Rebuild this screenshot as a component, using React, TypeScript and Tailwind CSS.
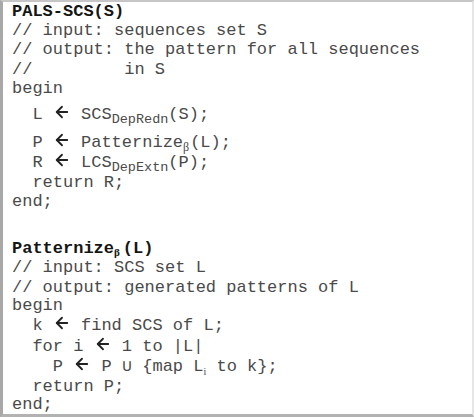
import type { ReactNode } from "react";
import { ArrowLeft } from "lucide-react";

const mono = "font-['Liberation_Mono','DejaVu_Sans_Mono',monospace]";

// one line of the listing, text sits on the bottom of a fixed-height row
function Line({ h, children, bold }: { h: string; children?: ReactNode; bold?: boolean }) {
  return (
    <div className={`flex items-end ${h}`}>
      <span className={`whitespace-pre leading-[19.5px] ${bold ? "font-bold text-[#151515]" : ""}`}>{children}</span>
    </div>
  );
}

const Arrow = () => (
  <span className="inline-flex w-[18px] justify-center align-[-2px]">
    <ArrowLeft size={18} strokeWidth={2.4} className="text-[#222]" />
  </span>
);

const Sub = ({ children }: { children: ReactNode }) => (
  <span className="text-[13.5px] leading-[0] align-[-4px]">{children}</span>
);

const Beta = ({ head }: { head?: boolean }) => (
  <span
    className={`font-['Liberation_Serif',serif] leading-[0] ${
      head ? "text-[11px] align-[-3px] mr-[3px]" : "text-[12px] align-[-4px] mr-[1px]"
    }`}
  >
    β
  </span>
);

export default function App() {
  return (
    <div
      className={`${mono} h-[417px] w-full overflow-hidden bg-white text-[17px] text-[#4a4a4a] border-t-2 border-l-[3px] border-b-[3px] border-r-2 border-t-[#c6c6c6] border-l-[#a8a8a8] border-b-[#b2b2b2] border-r-[#e6e6e6] pl-[9px]`}
    >
      {/* PALS-SCS */}
      <Line h="h-[19px]" bold>PALS-SCS(S)</Line>
      <Line h="h-[19px]">// input: sequences set S</Line>
      <Line h="h-[19px]">// output: the pattern for all sequences</Line>
      <Line h="h-[20px]">{"//         in S"}</Line>
      <Line h="h-[19px]">begin</Line>
      <Line h="h-[26px]">
        {"  L "}<Arrow />{" SCS"}<Sub>DepRedn</Sub>(S);
      </Line>
      <Line h="h-[28px]">
        {"  P "}<Arrow />{" Patternize"}<Beta />(L);
      </Line>
      <Line h="h-[20px]">
        {"  R "}<Arrow />{" LCS"}<Sub>DepExtn</Sub>(P);
      </Line>
      <Line h="h-[20px]">{"  return R;"}</Line>
      <Line h="h-[19px]">end;</Line>

      {/* Patternize */}
      <Line h="h-[47px]" bold>
        Patternize<Beta head />(L)
      </Line>
      <Line h="h-[19px]">// input: SCS set L</Line>
      <Line h="h-[20px]">// output: generated patterns of L</Line>
      <Line h="h-[18px]">begin</Line>
      <Line h="h-[20px]">
        {"  k "}<Arrow />{" find SCS of L;"}
      </Line>
      <Line h="h-[21px]">
        {"  for i "}<Arrow />{" 1 to |L|"}
      </Line>
      <Line h="h-[20px]">
        {"    P "}<Arrow />{" P ∪ {map L"}
        <span className="font-['Liberation_Serif',serif] text-[10px] leading-[0] align-[-4px]">i</span>
        {" to k};"}
      </Line>
      <Line h="h-[20px]">{"  return P;"}</Line>
      <Line h="h-[18px]">end;</Line>
    </div>
  );
}
